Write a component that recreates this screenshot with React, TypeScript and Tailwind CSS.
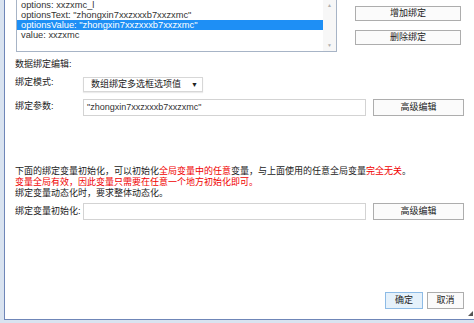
const font = { fontFamily: '"Liberation Sans", "Noto Sans CJK SC", sans-serif' };

function Btn({ label, primary = false, className = '' }: { label: string; primary?: boolean; className?: string }) {
  return (
    <button
      className={
        'flex items-center justify-center border text-[9px] text-[#222] leading-none ' +
        (primary ? 'border-[#8dbbe6] bg-[#e5f1fb] ' : 'border-[#adadad] bg-[#fbfbfb] ') +
        className
      }
    >
      {label}
    </button>
  );
}

const items = [
  'options: xxzxmc_l',
  'optionsText: "zhongxin7xxzxxxb7xxzxmc"',
  'optionsValue: "zhongxin7xxzxxxb7xxzxmc"',
  'value: xxzxmc',
];

export default function App() {
  return (
    <div style={font} className="w-[474px] h-[323px] bg-[#d9e3f0] pl-[4px] pb-[3px] flex">
      <div className="flex-1 flex flex-col bg-white border-l border-b border-[#6f86b8] pl-[10px] pr-[10px] pb-[10px] text-[9px] text-[#222]">
        {/* list + add/remove */}
        <div className="flex">
          <div className="ml-px w-[321px] h-[52px] border-x border-b border-[#a7b4c6] flex">
            <div className="flex-1">
              {items.map((t, i) => (
                <div
                  key={i}
                  className={
                    'h-[10px] leading-[10px] pl-[4px] whitespace-nowrap text-[9.3px] ' +
                    (i === 2 ? 'bg-[#1e8ff5] text-white' : 'text-[#333]')
                  }
                >
                  {t}
                </div>
              ))}
            </div>
            <div className="w-[13px] bg-[#f7f7f7] flex flex-col items-center justify-between py-[3px]">
              <span className="text-[5px] text-[#b0b0b0] leading-none">▲</span>
              <span className="text-[5px] text-[#b0b0b0] leading-none">▼</span>
            </div>
          </div>
          <div className="ml-[18px] pt-[6px] flex flex-col gap-[9px]">
            <Btn label="增加绑定" className="w-[106px] h-[15px]" />
            <Btn label="删除绑定" className="w-[106px] h-[15px]" />
          </div>
        </div>

        <div className="mt-[6px] h-[12px] leading-[12px]">数据绑定编辑:</div>

        <div className="mt-[7px] flex items-start">
          <div className="w-[68px] h-[12px] leading-[12px] mt-[-1px]">绑定模式:</div>
          <div className="w-[120px] h-[15px] border border-[#d7d7d7] bg-white flex items-center justify-between pl-[7px] pr-[4px] shadow-[0_1px_1px_rgba(0,0,0,0.08)]">
            <span>数组绑定多选框选项值</span>
            <span className="text-[7px] leading-none">▼</span>
          </div>
        </div>

        <div className="mt-[7px] flex items-start">
          <div className="w-[68px] h-[12px] leading-[12px] mt-[1px]">绑定参数:</div>
          <div className="w-[283px] h-[17px] border border-[#d3d3d3] flex items-center pl-[3px] text-[#333]">
            "zhongxin7xxzxxxb7xxzxmc"
          </div>
          <Btn label="高级编辑" className="ml-[7px] w-[91px] h-[17px]" />
        </div>

        <div className="mt-[50px] leading-[11px] whitespace-nowrap">
          <div>
            下面的绑定变量初始化，可以初始化<span className="text-[#f00000]">全局变量中的任意</span>变量，与上面使用的任意全局变量
            <span className="text-[#f00000]">完全无关</span>。
          </div>
          <div className="text-[#f00000]">变量全局有效，因此变量只需要在任意一个地方初始化即可。</div>
          <div>绑定变量动态化时，要求整体动态化。</div>
        </div>

        <div className="mt-[4px] flex items-start">
          <div className="w-[68px] h-[12px] leading-[12px] mt-[2px]">绑定变量初始化:</div>
          <div className="w-[283px] h-[17px] border border-[#d3d3d3]" />
          <Btn label="高级编辑" className="ml-[7px] w-[91px] h-[17px]" />
        </div>

        <div className="flex-1" />
        <div className="flex justify-end items-end gap-[4px] relative">
          <Btn label="确定" primary className="w-[38px] h-[17px]" />
          <Btn label="取消" className="w-[37px] h-[17px]" />
          <svg className="absolute right-[-9px] bottom-[-7px]" width="5" height="5" viewBox="0 0 5 5">
            <path d="M5 0 L5 5 L0 5 Z" fill="#555" />
          </svg>
        </div>
      </div>
    </div>
  );
}
